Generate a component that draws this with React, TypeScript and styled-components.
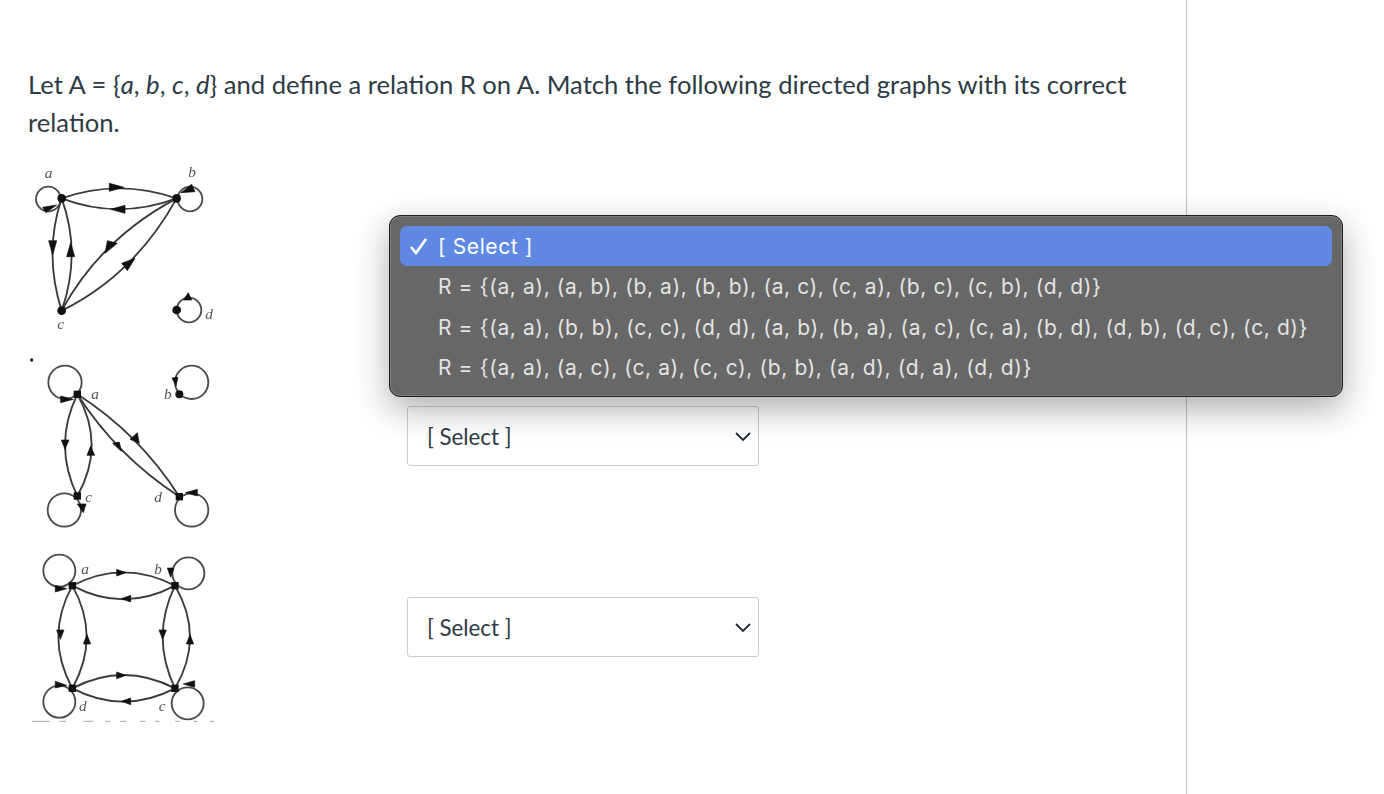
import React from "react";
import styled, { createGlobalStyle } from "styled-components";

const Global = createGlobalStyle`
  html, body { margin: 0; padding: 0; background: #fff; }
  body { font-family: Lato, "Liberation Sans", sans-serif; overflow: hidden; }
`;

const Page = styled.div`
  position: relative;
  width: 1384px;
  height: 794px;
  overflow: hidden;
`;

const Main = styled.main`
  box-sizing: border-box;
  width: 1187px;
  height: 794px;
  padding: 65px 0 0 28px;
  border-right: 1px solid #c2c2c2;
`;

const Question = styled.p`
  margin: 0 0 8px;
  font-size: 25.6px;
  line-height: 38px;
  color: #2d3b45;
  width: 1130px;
`;

const Row = styled.div`
  display: grid;
  grid-template-columns: 379px 352px;
  align-items: center;
  height: 191px;
`;

const GraphSvg = styled.svg`
  display: block;
  width: 220px;
  height: 191px;
  margin-left: -8px;
  filter: blur(0.75px);
`;

const SelectBox = styled.div`
  box-sizing: border-box;
  display: flex;
  align-items: center;
  justify-content: space-between;
  height: 60px;
  padding: 2px 7px 0 19px;
  border: 1px solid #c7cdd1;
  border-radius: 3px;
  font-size: 22.3px;
  color: #2d3b45;
  background: #fff;
`;

const Menu = styled.div`
  position: absolute;
  left: 389px;
  top: 215px;
  box-sizing: border-box;
  width: 954px;
  height: 182px;
  padding: 10px;
  background: #666766;
  border: 1px solid #1f1f1f;
  border-radius: 11px;
  box-shadow: inset 0 0 0 1px #7d7e7d, 0 12px 34px rgba(0, 0, 0, 0.32);
  font-family: Inter, "Liberation Sans", sans-serif;
`;

const Option = styled.div<{ $active?: boolean }>`
  position: relative;
  height: 40.3px;
  line-height: 41px;
  padding-left: 38px;
  border-radius: 7px;
  font-size: 21px;
  letter-spacing: 0.6px;
  white-space: nowrap;
  color: ${(p) => (p.$active ? "#ffffff" : "#e3e3e3")};
  background: ${(p) => (p.$active ? "#6089e4" : "transparent")};
`;

const Check = styled.svg`
  position: absolute;
  left: 9px;
  top: 11px;
  width: 20px;
  height: 18px;
`;

const Label = styled.text`
  font-family: "Liberation Serif", serif;
  font-style: italic;
  font-size: 46px;
  fill: #555;
`;

const Edge = styled.path`
  fill: none;
  stroke: #3a3a3a;
  stroke-width: 5.5;
`;

const Loop = styled.circle`
  fill: none;
  stroke: #4a4a4a;
  stroke-width: 5.5;
`;

const Head = styled.polygon`
  fill: #111;
  stroke: #111;
  stroke-width: 2;
`;

const Chevron = () => (
  <svg width="16" height="10" viewBox="0 0 16 10" fill="none">
    <path d="M1 1l7 7 7-7" stroke="#1f2a30" strokeWidth="1.8" />
  </svg>
);

const GraphOne = () => (
  <GraphSvg viewBox="0 -3 660 573">
    <Loop cx={85} cy={147} r={37} />
    <Loop cx={510} cy={147} r={37} />
    <Loop cx={507} cy={480} r={37} />
    <Edge d="M125 145Q295 85 470 145" />
    <Edge d="M125 145Q295 210 470 145" />
    <Edge d="M125 145Q70 310 125 482" />
    <Edge d="M125 145Q185 310 125 482" />
    <Edge d="M470 145Q242 266 125 482" />
    <Edge d="M470 145Q342 376 125 482" />
    <Head points="268,100 312,112 268,124" />
    <Head points="315,166 272,178 315,190" />
    <Head points="86,272 110,272 98,315" />
    <Head points="140,320 164,320 152,278" />
    <Head points="292,280 255,310 262,272" />
    <Head points="345,325 305,340 322,362" />
    <Head points="110,165 68,172 78,188" />
    <Head points="483,128 515,103 525,125" />
    <Head points="490,450 505,428 515,450" />
    <circle cx={125} cy={145} r={13} fill="#111" />
    <circle cx={470} cy={145} r={13} fill="#111" />
    <circle cx={125} cy={482} r={13} fill="#111" />
    <circle cx={470} cy={480} r={13} fill="#111" />
    <Label x={74} y={84}>a</Label>
    <Label x={505} y={82}>b</Label>
    <Label x={112} y={536}>c</Label>
    <Label x={556} y={506}>d</Label>
  </GraphSvg>
);

const GraphTwo = () => (
  <GraphSvg viewBox="0 -30 660 573">
    <circle cx={35} cy={30} r={5} fill="#222" />
    <Loop cx={135} cy={97} r={50} />
    <Loop cx={515} cy={97} r={50} />
    <Loop cx={133} cy={480} r={50} />
    <Loop cx={515} cy={480} r={50} />
    <Edge d="M172 133Q98 285 172 438" />
    <Edge d="M172 133Q258 285 172 438" />
    <Edge d="M172 133Q358 252 478 440" />
    <Edge d="M172 133Q292 320 478 440" />
    <Head points="124,270 147,270 135,298" />
    <Head points="201,316 224,316 212,288" />
    <Head points="358,280 330,268 352,248" />
    <Head points="304,304 278,280 298,276" />
    <Head points="160,148 122,138 122,158" />
    <Head points="468,108 456,84 474,82" />
    <Head points="190,488 172,462 198,462" />
    <Head points="496,428 532,418 532,438" />
    <rect x={161} y={122} width={22} height={22} fill="#111" />
    <circle cx={478} cy={133} r={12} fill="#111" />
    <rect x={161} y={427} width={22} height={22} fill="#111" />
    <rect x={467} y={429} width={22} height={22} fill="#111" />
    <Label x={214} y={146}>a</Label>
    <Label x={432} y={146}>b</Label>
    <Label x={196} y={456}>c</Label>
    <Label x={403} y={456}>d</Label>
  </GraphSvg>
);

const GraphThree = () => (
  <GraphSvg viewBox="0 -27 660 573">
    <Loop cx={118} cy={92} r={48} />
    <Loop cx={505} cy={100} r={48} />
    <Loop cx={503} cy={490} r={48} />
    <Loop cx={118} cy={485} r={48} />
    <Edge d="M157 137Q310 57 465 137" />
    <Edge d="M157 137Q310 219 465 137" />
    <Edge d="M157 137Q73 291 157 445" />
    <Edge d="M157 137Q243 291 157 445" />
    <Edge d="M465 137Q391 291 465 445" />
    <Edge d="M465 137Q555 291 465 445" />
    <Edge d="M157 445Q310 365 465 445" />
    <Edge d="M157 445Q310 525 465 445" />
    <Head points="290,88 318,98 290,108" />
    <Head points="332,166 304,176 332,186" />
    <Head points="110,270 132,270 121,298" />
    <Head points="190,312 212,312 201,284" />
    <Head points="417,270 439,270 428,298" />
    <Head points="499,312 521,312 510,284" />
    <Head points="290,396 318,406 290,416" />
    <Head points="332,474 304,484 332,494" />
    <Head points="140,146 106,136 106,156" />
    <Head points="452,112 442,84 462,84" />
    <Head points="140,436 106,424 106,444" />
    <Head points="490,432 524,422 524,442" />
    <rect x={146} y={126} width={22} height={22} fill="#111" />
    <rect x={454} y={126} width={22} height={22} fill="#111" />
    <rect x={454} y={434} width={22} height={22} fill="#111" />
    <rect x={146} y={434} width={22} height={22} fill="#111" />
    <Label x={184} y={102}>a</Label>
    <Label x={403} y={102}>b</Label>
    <Label x={416} y={512}>c</Label>
    <Label x={177} y={512}>d</Label>
    <path d="M35 544h54M118 544h20M190 544h30M255 544h16M300 544h18M360 544h16M405 544h14M465 544h16M520 544h12M570 544h12" stroke="#aaa" strokeWidth="3" />
  </GraphSvg>
);

const options = [
  "R = {(a, a), (a, b), (b, a), (b, b), (a, c), (c, a), (b, c), (c, b), (d, d)}",
  "R = {(a, a), (b, b), (c, c), (d, d), (a, b), (b, a), (a, c), (c, a), (b, d), (d, b), (d, c), (c, d)}",
  "R = {(a, a), (a, c), (c, a), (c, c), (b, b), (a, d), (d, a), (d, d)}",
];

export default function App() {
  return (
    <Page>
      <Global />
      <Main>
        <Question>
          Let A = {"{"}<i>a</i>, <i>b</i>, <i>c</i>, <i>d</i>{"}"} and define a relation R on A. Match the following directed graphs with its correct relation.
        </Question>
        <Row>
          <GraphOne />
          <SelectBox>[ Select ]<Chevron /></SelectBox>
        </Row>
        <Row>
          <GraphTwo />
          <SelectBox>[ Select ]<Chevron /></SelectBox>
        </Row>
        <Row>
          <GraphThree />
          <SelectBox>[ Select ]<Chevron /></SelectBox>
        </Row>
      </Main>
      <Menu>
        <Option $active>
          <Check viewBox="0 0 20 18" fill="none">
            <path d="M2 10l5 6L17 2" stroke="#fff" strokeWidth="2.6" />
          </Check>
          [ Select ]
        </Option>
        {options.map((o) => (
          <Option key={o}>{o}</Option>
        ))}
      </Menu>
    </Page>
  );
}
